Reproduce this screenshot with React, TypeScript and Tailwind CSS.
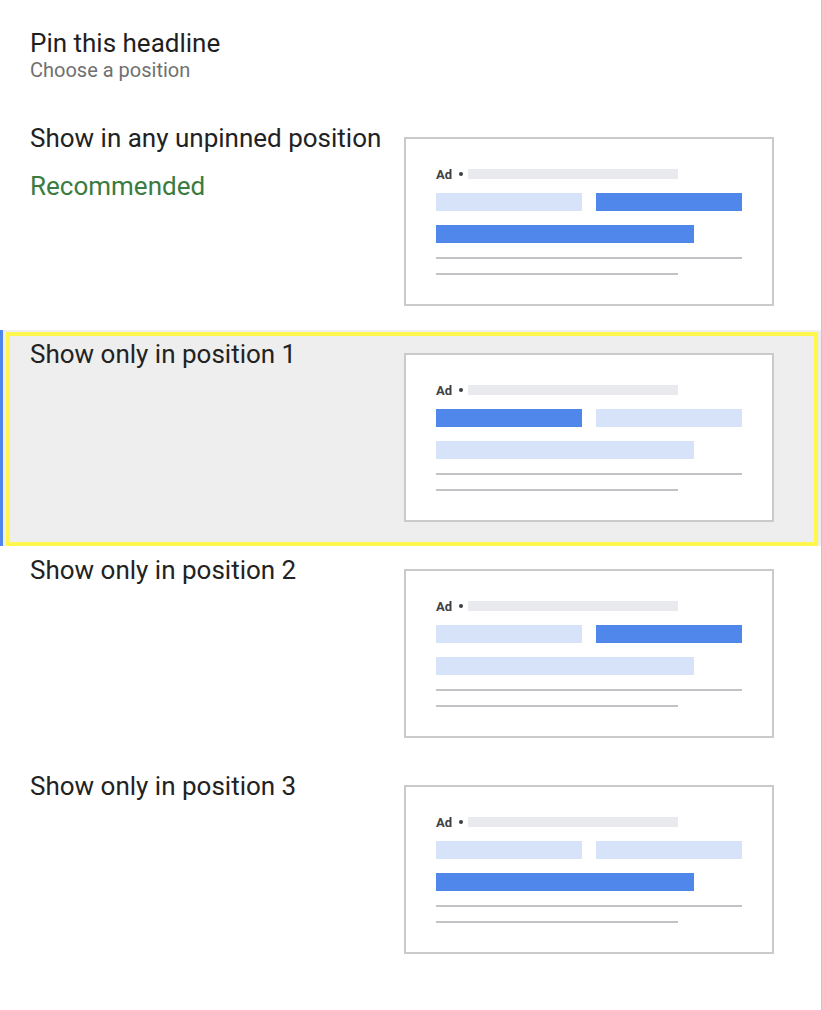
type Pin = 'any' | 1 | 2 | 3;

interface Option {
  id: Pin;
  label: string;
  note?: string;
}

const options: Option[] = [
  { id: 'any', label: 'Show in any unpinned position', note: 'Recommended' },
  { id: 1, label: 'Show only in position 1' },
  { id: 2, label: 'Show only in position 2' },
  { id: 3, label: 'Show only in position 3' },
];

// which of the three headline slots are filled blue in the little preview
const highlight: Record<string, boolean[]> = {
  any: [false, true, true],
  '1': [true, false, false],
  '2': [false, true, false],
  '3': [false, false, true],
};

function Bar({ on, className = '' }: { on: boolean; className?: string }) {
  return <div className={`h-[18px] ${on ? 'bg-[#5087ea]' : 'bg-[#d7e3f8]'} ${className}`} />;
}

function AdPreview({ pin }: { pin: Pin }) {
  const [a, b, c] = highlight[String(pin)];
  return (
    <div className="w-[370px] h-[169px] shrink-0 bg-white border-2 border-[#c9cacc] pt-[30px] pl-[30px]">
      <div className="flex items-center h-[10px]">
        <span className="w-[23px] text-[13px] leading-none font-bold text-[#3c4043]">Ad</span>
        <span className="w-[4px] h-[4px] rounded-full bg-[#3c4043]" />
        <span className="ml-[5px] w-[210px] h-[10px] bg-[#e8eaed]" />
      </div>
      <div className="flex gap-[14px] mt-[14px]">
        <Bar on={a} className="w-[146px]" />
        <Bar on={b} className="w-[146px]" />
      </div>
      <Bar on={c} className="w-[258px] mt-[14px]" />
      <div className="w-[306px] h-[2px] bg-[#c1c3c7] mt-[14px]" />
      <div className="w-[242px] h-[2px] bg-[#c1c3c7] mt-[14px]" />
    </div>
  );
}

export default function App() {
  const selected: Pin = 1;
  return (
    <div
      className="w-[822px] min-h-[1010px] bg-white border-r border-[#c6c7c9] text-[#202124]"
      style={{ fontFamily: 'Roboto, "Noto Sans", sans-serif' }}
    >
      <div className="pl-[30px] pt-[28px]">
        <h1 className="text-[26px] leading-[30px] font-normal text-[#1f1f1f]">Pin this headline</h1>
        <p className="text-[20px] leading-[24px] text-[#707070]">Choose a position</p>
      </div>

      <div className="mt-[32px]">
        {options.map((opt) => {
          const active = opt.id === selected;
          return (
            <div
              key={String(opt.id)}
              className={`relative flex h-[216px] pl-[30px] ${
                active ? 'bg-[#eeeeee] shadow-[inset_3px_0_0_#4f86ec]' : ''
              }`}
            >
              {active && (
                <span className="pointer-events-none absolute top-[2px] left-[6px] right-[3px] bottom-0 border-4 border-[#fff74d]" />
              )}
              <div className="w-[374px] pt-[9px]">
                <div className="text-[26px] leading-[30px] text-[#222222]">{opt.label}</div>
                {opt.note && (
                  <div className="mt-[18px] text-[26px] leading-[30px] text-[#3a7b40]">{opt.note}</div>
                )}
              </div>
              <div className="mt-[23px]">
                <AdPreview pin={opt.id} />
              </div>
            </div>
          );
        })}
      </div>
    </div>
  );
}
